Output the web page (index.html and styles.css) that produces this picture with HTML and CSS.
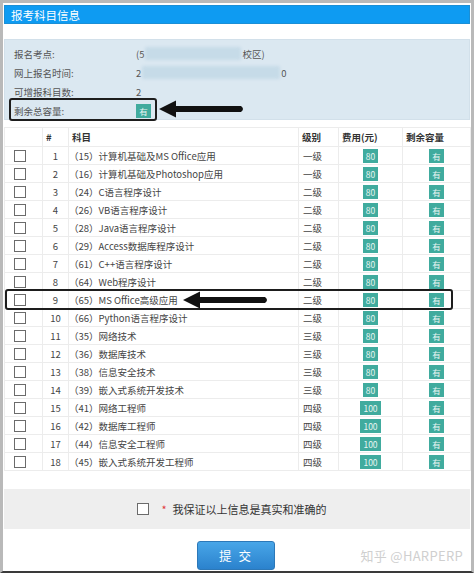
FILE: index.html
```html
<!DOCTYPE html>
<html lang="zh-CN">
<head>
    <meta charset="UTF-8">
    <title>报考科目信息</title>
    <link rel="stylesheet" href="styles.css">
</head>
<body>
    <div class="page">
        <div class="title-bar">报考科目信息</div>

        <div class="info-panel">
            <div class="info-row">
                <span class="info-label">报名考点:</span>
                <span class="info-value">(5<span class="blur blur-short"></span>校区)</span>
            </div>
            <div class="info-row">
                <span class="info-label">网上报名时间:</span>
                <span class="info-value">2<span class="blur blur-long"></span>0</span>
            </div>
            <div class="info-row">
                <span class="info-label">可增报科目数:</span>
                <span class="info-value">2</span>
            </div>
            <div class="info-row">
                <span class="info-label">剩余总容量:</span>
                <span class="info-value"><span class="badge">有</span></span>
            </div>
        </div>

        <table class="subjects">
            <colgroup>
                <col class="c-check"><col class="c-num"><col class="c-name">
                <col class="c-level"><col class="c-fee"><col class="c-cap">
            </colgroup>
            <thead>
                <tr><th></th><th>#</th><th>科目</th><th>级别</th><th>费用(元)</th><th>剩余容量</th></tr>
            </thead>
            <tbody id="rows"></tbody>
        </table>

        <div class="confirm-bar">
            <span class="box"></span>
            <span class="star">*</span>
            <span class="confirm-text">我保证以上信息是真实和准确的</span>
        </div>

        <div class="actions">
            <button class="submit">提 交</button>
            <span class="watermark">知乎 @HARPERP</span>
        </div>

        <!-- annotations -->
        <div class="mark mark-total"></div>
        <svg class="arrow arrow-total" width="86" height="18" viewBox="0 0 86 18">
            <path d="M0 9 L17 0.5 L17 6 L82 6 Q86 9 82 12 L17 12 L17 17.5 Z" fill="#111"/>
        </svg>
        <div class="mark mark-row"></div>
        <svg class="arrow arrow-row" width="86" height="18" viewBox="0 0 86 18">
            <path d="M0 9 L17 0.5 L17 6 L82 6 Q86 9 82 12 L17 12 L17 17.5 Z" fill="#111"/>
        </svg>
    </div>

    <script>
        const subjects = [
            ['15', '计算机基础及MS Office应用', '一级', '80'],
            ['16', '计算机基础及Photoshop应用', '一级', '80'],
            ['24', 'C语言程序设计', '二级', '80'],
            ['26', 'VB语言程序设计', '二级', '80'],
            ['28', 'Java语言程序设计', '二级', '80'],
            ['29', 'Access数据库程序设计', '二级', '80'],
            ['61', 'C++语言程序设计', '二级', '80'],
            ['64', 'Web程序设计', '二级', '80'],
            ['65', 'MS Office高级应用', '二级', '80'],
            ['66', 'Python语言程序设计', '二级', '80'],
            ['35', '网络技术', '三级', '80'],
            ['36', '数据库技术', '三级', '80'],
            ['38', '信息安全技术', '三级', '80'],
            ['39', '嵌入式系统开发技术', '三级', '80'],
            ['41', '网络工程师', '四级', '100'],
            ['42', '数据库工程师', '四级', '100'],
            ['44', '信息安全工程师', '四级', '100'],
            ['45', '嵌入式系统开发工程师', '四级', '100']
        ];

        const body = document.getElementById('rows');
        subjects.forEach((s, i) => {
            const tr = document.createElement('tr');
            tr.innerHTML =
                '<td class="check"><span class="box"></span></td>' +
                '<td class="num">' + (i + 1) + '</td>' +
                '<td class="name">（' + s[0] + '）' + s[1] + '</td>' +
                '<td>' + s[2] + '</td>' +
                '<td class="center"><span class="badge">' + s[3] + '</span></td>' +
                '<td class="center"><span class="badge">有</span></td>';
            body.appendChild(tr);
        });
    </script>
</body>
</html>
```

FILE: styles.css
```css
body {
    margin: 0;
    background: #fff;
    font-family: "Noto Sans CJK SC", "Liberation Sans", sans-serif;
}

.page {
    position: relative;
    box-sizing: border-box;
    width: 474px;
    height: 573px;
    padding: 2px 1px 0;
    border: 3px solid #b9b9b9;
    border-bottom: 2px solid #3a3a3a;
    overflow: hidden;
}

.title-bar {
    height: 19px;
    line-height: 19px;
    padding-left: 6px;
    background-color: #0e9bf2;
    border: 1px solid #1b8fd6;
    box-sizing: border-box;
    color: #fff;
    font-size: 11.5px;
}

.info-panel {
    margin-top: 15px;
    height: 81px;
    box-sizing: border-box;
    padding-top: 4px;
    background-color: #dbe8f1;
    border: 1px solid #d2e0ea;
}

.info-row {
    display: flex;
    align-items: center;
    height: 19px;
    font-size: 9.5px;
    color: #555;
}

.info-label {
    width: 122px;
    padding-left: 9px;
}

.info-value {
    display: flex;
    align-items: center;
}

.blur {
    display: inline-block;
    height: 13px;
    margin: 0 1px;
    background-color: #c6dbe8;
    border-radius: 2px;
    filter: blur(1.5px);
}

.blur-short {
    width: 96px;
}

.blur-long {
    width: 138px;
}

.badge {
    display: inline-block;
    min-width: 15px;
    height: 14px;
    line-height: 14px;
    padding: 0 3px;
    box-sizing: border-box;
    background-color: #40ab9e;
    color: #e8f5f2;
    font-size: 8.5px;
    text-align: center;
}

.subjects {
    margin-top: 7px;
    width: 466px;
    table-layout: fixed;
    border-collapse: collapse;
    border: 1px solid #e4e4e4;
    font-size: 9.5px;
    color: #444;
}

.c-check { width: 38px; }
.c-num { width: 26px; }
.c-name { width: 230px; }
.c-level { width: 40px; }
.c-fee { width: 64px; }
.c-cap { width: 68px; }

.subjects th {
    height: 18px;
    padding: 0 3px;
    text-align: left;
    font-weight: bold;
    color: #333;
    border: 1px solid #ececec;
}

.subjects td {
    height: 17px;
    padding: 0 4px;
    border: 1px solid #ececec;
    white-space: nowrap;
    overflow: hidden;
}

.subjects td.check {
    padding-left: 9px;
}

.subjects .box {
    display: block;
}

.box {
    display: inline-block;
    width: 12px;
    height: 12px;
    box-sizing: border-box;
    border: 1px solid #6b6b6b;
    background: #fff;
}

.subjects td.num {
    text-align: center;
}

.subjects td.name {
    padding-left: 0;
}

.subjects td.center {
    text-align: center;
    padding: 0;
}

.subjects td .badge {
    vertical-align: middle;
}

.confirm-bar {
    margin-top: 18px;
    height: 40px;
    display: flex;
    align-items: center;
    justify-content: center;
    padding-right: 10px;
    background-color: #eeeeee;
}

.confirm-bar .star {
    margin: 0 6px 0 12px;
    color: #e03a3a;
    font-size: 11px;
}

.confirm-text {
    font-size: 11px;
    color: #333;
}

.actions {
    position: relative;
    display: flex;
    justify-content: center;
    margin-top: 12px;
    padding-right: 2px;
}

.submit {
    width: 78px;
    height: 29px;
    border: 1px solid #2c78b8;
    border-radius: 3px;
    background: linear-gradient(#48a6e8, #2b82cd);
    color: #fff;
    font-family: "Noto Sans CJK SC", sans-serif;
    font-size: 12.5px;
    letter-spacing: 2px;
}

.watermark {
    position: absolute;
    right: 7px;
    top: 5px;
    color: #cfcfcf;
    font-size: 13px;
    letter-spacing: 0.3px;
}

.mark {
    position: absolute;
    border: 2px solid #1d1d1d;
    border-radius: 3px;
    box-sizing: border-box;
}

.mark-total {
    left: 6px;
    top: 95px;
    width: 148px;
    height: 23px;
}

.mark-row {
    left: 2px;
    top: 286px;
    width: 448px;
    height: 21px;
}

.arrow {
    position: absolute;
}

.arrow-total {
    left: 156px;
    top: 97px;
}

.arrow-row {
    left: 180px;
    top: 288px;
}
```
